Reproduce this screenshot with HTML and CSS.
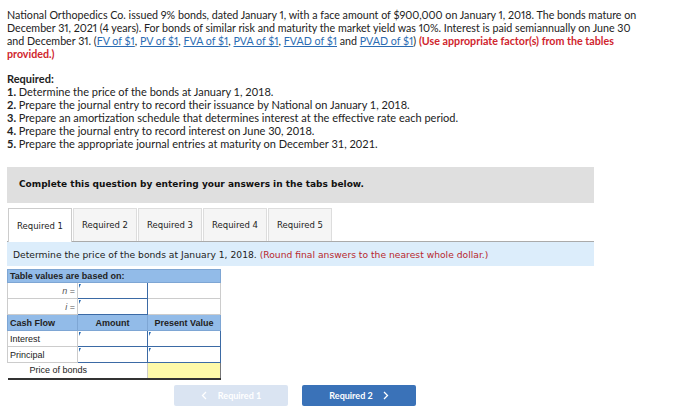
FILE: index.html
```html
<!DOCTYPE html>
<html>
<head>
<meta charset="utf-8">
<link rel="stylesheet" href="styles.css">
</head>
<body>
<div class="page">
  <p class="intro">National Orthopedics Co. issued 9% bonds, dated January 1, with a face amount of $900,000 on January 1, 2018. The bonds mature on<br>December 31, 2021 (4 years). For bonds of similar risk and maturity the market yield was 10%. Interest is paid semiannually on June 30<br>and December 31. (<a href="#">FV of $1</a>, <a href="#">PV of $1</a>, <a href="#">FVA of $1</a>, <a href="#">PVA of $1</a>, <a href="#">FVAD of $1</a> and <a href="#">PVAD of $1</a>) <span class="red">(Use appropriate factor(s) from the tables<br>provided.)</span></p>
  <div class="req">
    <div class="b">Required:</div>
    <div><b>1.</b> Determine the price of the bonds at January 1, 2018.</div>
    <div><b>2.</b> Prepare the journal entry to record their issuance by National on January 1, 2018.</div>
    <div><b>3.</b> Prepare an amortization schedule that determines interest at the effective rate each period.</div>
    <div><b>4.</b> Prepare the journal entry to record interest on June 30, 2018.</div>
    <div><b>5.</b> Prepare the appropriate journal entries at maturity on December 31, 2021.</div>
  </div>
  <div class="graybox">Complete this question by entering your answers in the tabs below.</div>
  <div class="tabs">
    <div class="tab active">Required 1</div>
    <div class="tab">Required 2</div>
    <div class="tab">Required 3</div>
    <div class="tab">Required 4</div>
    <div class="tab">Required 5</div>
  </div>
  <div class="band">Determine the price of the bonds at January 1, 2018. <span class="red2">(Round final answers to the nearest whole dollar.)</span></div>
  <table class="tv">
    <tr><th colspan="3" class="title">Table values are based on:</th></tr>
    <tr><td class="lbl"><i>n</i> =</td><td class="inp"><span class="mk"></span></td><td class="empty"></td></tr>
    <tr><td class="lbl"><i>i</i> =</td><td class="inp"><span class="mk"></span></td><td class="empty"></td></tr>
    <tr><th class="left">Cash Flow</th><th>Amount</th><th>Present Value</th></tr>
    <tr><td>Interest</td><td class="inp"><span class="mk"></span></td><td class="inp"><span class="mk"></span></td></tr>
    <tr><td>Principal</td><td class="inp"><span class="mk"></span></td><td class="inp"><span class="mk"></span></td></tr>
    <tr class="total"><td colspan="2" class="pob">Price of bonds</td><td class="yellow"></td></tr>
  </table>
  <div class="nav">
    <div class="btn prev"><svg class="chev l" width="6" height="9" viewBox="0 0 6 9"><path d="M5 1 L1.5 4.5 L5 8" fill="none" stroke="#fff" stroke-width="1.3"/></svg>Required 1</div>
    <div class="btn next">Required 2<svg class="chev r" width="6" height="9" viewBox="0 0 6 9"><path d="M1 1 L4.5 4.5 L1 8" fill="none" stroke="#fff" stroke-width="1.3"/></svg></div>
  </div>
</div>
</body>
</html>
```

FILE: styles.css
```css
html, body { margin: 0; padding: 0; background: #fff; }
.page { padding: 8px 7px 0 7px; font-family: Lato, "Liberation Sans", sans-serif; color: #222; }
.intro { margin: 0; font-size: 10.7px; line-height: 13px; white-space: nowrap; font-variant-numeric: lining-nums proportional-nums; }
.intro a { color: #2b6cb3; text-decoration: underline; }
.red { color: #d0252d; font-weight: bold; }
.req { margin-top: 12px; font-size: 11px; line-height: 13px; }
.req .b, .req b { font-weight: bold; }
.graybox { margin-top: 17px; width: 587px; height: 36px; box-sizing: border-box; background: #dfdfdf; font-family: "DejaVu Sans", Verdana, sans-serif; font-weight: bold; font-size: 9px; padding: 9px 12px; line-height: 16px; color: #111; }
.tabs { display: flex; margin-top: 5px; margin-left: 1px; gap: 1px; }
.tab { width: 64px; height: 33px; box-sizing: border-box; border: 1px solid #ddd; border-bottom: none; background: #f5f5f5; font-family: "DejaVu Sans", Verdana, sans-serif; font-size: 8.5px; display: flex; align-items: center; justify-content: center; color: #222; }
.tab.active { background: #fff; border-color: #ccc; position: relative; z-index: 1; height: 34px; margin-bottom: -1px; }
.band { width: 587px; height: 25px; box-sizing: border-box; border-top: 1px solid #aaa; background: #dcedfb; font-family: "DejaVu Sans", Verdana, sans-serif; font-size: 9.2px; padding: 0 6px; display: flex; align-items: center; color: #222; white-space: pre; }
.red2 { color: #b8282e; }
.tv { margin-top: 3px; border-collapse: collapse; font-family: "Liberation Sans", Arial, sans-serif; font-size: 9px; color: #222; }
.tv td, .tv th { height: 15px; padding: 0 2px; border: 1px solid #ccc; box-sizing: border-box; }
.tv tr { height: 16px; }
.tv tr:first-child { height: 13px; }
.tv th { background: #92bbe8; font-weight: bold; border: 1px solid #7ea6d4; }
.tv th.title { text-align: left; height: 13px; }
.tv th.left { text-align: left; }
.tv td:nth-child(1), .tv th:nth-child(1) { width: 70px; }
.tv td:nth-child(2), .tv th:nth-child(2) { width: 70px; }
.tv td:nth-child(3), .tv th:nth-child(3) { width: 73px; }
.tv td.lbl { text-align: right; color: #555; }
.tv td.inp { border: 1px solid #3b6aa5; position: relative; }
.tv td.empty { border: 1px solid #ccc; }
.mk { position: absolute; left: 1px; top: 1px; width: 0; height: 0; border-top: 4px solid #2b6cb3; border-right: 2px solid transparent; }
.tv td.pob { padding-left: 22px; border-left: none; }
.tv tr.total td { border-bottom: 2px solid #333; }
.tv td.yellow { background: #fdf9a9; border: 1px solid #777; border-bottom: 2px solid #333; }
.nav { display: flex; gap: 14px; margin-top: 5px; margin-left: 167px; }
.btn { width: 114px; height: 21px; border-radius: 2px; font-family: Lato, "Liberation Sans", sans-serif; font-size: 9px; font-weight: bold; display: flex; align-items: center; justify-content: center; color: #fff; }
.btn.prev { background: #dae4f2; }
.btn.next { background: #3a72b8; }
.chev.l { margin-right: 11px; }
.chev.r { margin-left: 10px; }
```
